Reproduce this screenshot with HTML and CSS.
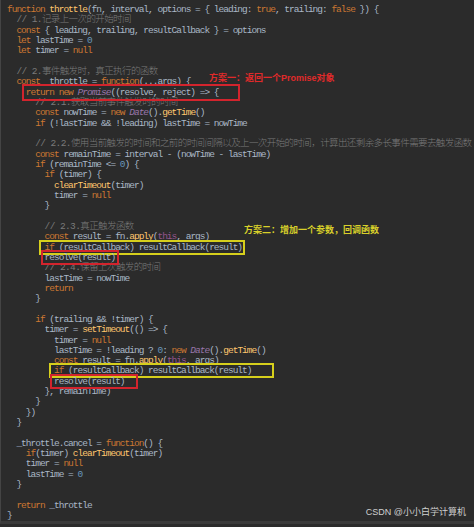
FILE: index.html
```html
<!DOCTYPE html>
<html lang="zh">
<head>
    <meta charset="UTF-8">
    <title>throttle</title>
    <link rel="stylesheet" href="styles.css">
</head>
<body>
    <div class="editor">
        <div class="line"><span class="kw">function</span> <span class="fn">throttle</span>(fn, interval, options = { leading: <span class="kw">true</span>, trailing: <span class="kw">false</span> }) {</div>
        <div class="line">  <span class="cm">// 1.记录上一次的开始时间</span></div>
        <div class="line">  <span class="kw">const</span> { leading, trailing, resultCallback } = options</div>
        <div class="line">  <span class="kw">let</span> lastTime = <span class="num">0</span></div>
        <div class="line">  <span class="kw">let</span> timer = <span class="kw">null</span></div>
        <div class="line"> </div>
        <div class="line">  <span class="cm">// 2.事件触发时，真正执行的函数</span></div>
        <div class="line">  <span class="kw">const</span> _throttle = <span class="kw">function</span>(...args) {</div>
        <div class="line">    <span class="mark red r1"><span class="kw">return new</span> <span class="cls">Promise</span>((resolve, reject) => {</span></div>
        <div class="line">      <span class="cm">// 2.1.获取当前事件触发时的时间</span></div>
        <div class="line">      <span class="kw">const</span> nowTime = <span class="kw">new</span> <span class="cls">Date</span>().<span class="fn">getTime</span>()</div>
        <div class="line">      <span class="kw">if</span> (!lastTime &amp;&amp; !leading) lastTime = nowTime</div>
        <div class="line"> </div>
        <div class="line">      <span class="cm">// 2.2.使用当前触发的时间和之前的时间间隔以及上一次开始的时间，计算出还剩余多长事件需要去触发函数</span></div>
        <div class="line">      <span class="kw">const</span> remainTime = interval - (nowTime - lastTime)</div>
        <div class="line">      <span class="kw">if</span> (remainTime &lt;= <span class="num">0</span>) {</div>
        <div class="line">        <span class="kw">if</span> (timer) {</div>
        <div class="line">          <span class="fn">clearTimeout</span>(timer)</div>
        <div class="line">          timer = <span class="kw">null</span></div>
        <div class="line">        }</div>
        <div class="line"> </div>
        <div class="line">        <span class="cm">// 2.3.真正触发函数</span></div>
        <div class="line">        <span class="kw">const</span> result = fn.<span class="fn">apply</span>(<span class="this">this</span>, args)</div>
        <div class="line">        <span class="mark yellow y1"><span class="kw">if</span> (resultCallback) resultCallback(result)</span></div>
        <div class="line">        <span class="mark red r2">resolve(result)</span></div>
        <div class="line">        <span class="cm">// 2.4.保留上次触发的时间</span></div>
        <div class="line">        lastTime = nowTime</div>
        <div class="line">        <span class="kw">return</span></div>
        <div class="line">      }</div>
        <div class="line"> </div>
        <div class="line">      <span class="kw">if</span> (trailing &amp;&amp; !timer) {</div>
        <div class="line">        timer = <span class="fn">setTimeout</span>(() => {</div>
        <div class="line">          timer = <span class="kw">null</span></div>
        <div class="line">          lastTime = !leading ? <span class="num">0</span>: <span class="kw">new</span> <span class="cls">Date</span>().<span class="fn">getTime</span>()</div>
        <div class="line">          <span class="kw">const</span> result = fn.<span class="fn">apply</span>(<span class="this">this</span>, args)</div>
        <div class="line">          <span class="mark yellow y2"><span class="kw">if</span> (resultCallback) resultCallback(result)</span></div>
        <div class="line">          <span class="mark red r3">resolve(result)</span></div>
        <div class="line">        }, remainTime)</div>
        <div class="line">      }</div>
        <div class="line">    })</div>
        <div class="line">  }</div>
        <div class="line"> </div>
        <div class="line">  _throttle.cancel = <span class="kw">function</span>() {</div>
        <div class="line">    <span class="kw">if</span>(timer) <span class="fn">clearTimeout</span>(timer)</div>
        <div class="line">    timer = <span class="kw">null</span></div>
        <div class="line">    lastTime = <span class="num">0</span></div>
        <div class="line">  }</div>
        <div class="line"> </div>
        <div class="line">  <span class="kw">return</span> _throttle</div>
        <div class="line">}</div>

        <div class="note note-red">方案一：返回一个Promise对象</div>
        <div class="note note-yellow">方案二：增加一个参数，回调函数</div>
        <div class="watermark">CSDN @小小白学计算机</div>
    </div>
</body>
</html>
```

FILE: styles.css
```css
html, body {
    margin: 0;
    background: #2b2b2b;
}
.editor {
    position: relative;
    height: 524px;
    padding: 5px 0 0 6px;
    box-sizing: border-box;
    border-left: 1px solid #444;
    border-bottom: 3px solid #3a3a3a;
    font-family: "Liberation Mono", "Noto Sans CJK SC", monospace;
    font-size: 9.5px;
    letter-spacing: -1px;
    color: #a9b7c6;
    overflow: hidden;
}
.line {
    height: 10.33px;
    line-height: 10.33px;
    white-space: pre;
}
.kw { color: #cc7832; }
.fn { color: #ffc66d; }
.num { color: #6897bb; }
.cm { color: #7a7a7a; letter-spacing: -0.6px; font-weight: 300; }
.cls { color: #9876aa; font-style: italic; }
.this { color: #94558d; }

/* annotation boxes drawn over the code */
.mark { position: relative; }
.mark::after {
    content: "";
    position: absolute;
    top: -2px;
    bottom: -2px;
    left: -4px;
    right: -4px;
    border-width: 2px;
    border-style: solid;
}
.red::after { border-color: #d3242d; }
.yellow::after { border-color: #d6cf1c; }
.r1::after { left: -4px; right: -21px; top: -3px; bottom: -3px; }
.y1::after { left: -6px; right: -3px; }
.r2::after { left: -4px; right: -4px; }
.y2::after { left: -5px; right: -23px; }
.r3::after { left: -4px; right: -13px; }

.note {
    position: absolute;
    font-family: "Liberation Sans", "Noto Sans CJK SC", sans-serif;
    font-size: 9px;
    font-weight: bold;
    letter-spacing: 0;
    white-space: nowrap;
}
.note-red { left: 208px; top: 71px; color: #e02a2a; }
.note-yellow { left: 243px; top: 223px; color: #d8d02a; }
.watermark {
    position: absolute;
    right: 8px;
    bottom: 3px;
    font-family: "Liberation Sans", "Noto Sans CJK SC", sans-serif;
    font-size: 9px;
    letter-spacing: 0;
    color: #cfcfcf;
}
```
